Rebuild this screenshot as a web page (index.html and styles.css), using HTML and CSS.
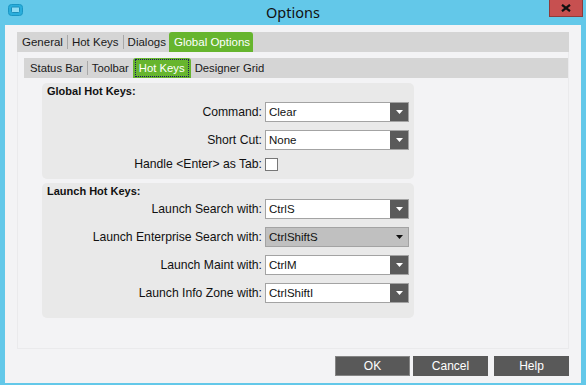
FILE: index.html
```html
<!DOCTYPE html>
<html>
<head>
<meta charset="utf-8">
<link rel="stylesheet" href="styles.css">
</head>
<body>
<div class="window">
  <div class="titlebar">
    <div class="tb-left">
      <svg class="appicon" width="15" height="12" viewBox="0 0 15 12">
        <rect x="0.5" y="0.5" width="14" height="11" rx="3" fill="#2aaedc" stroke="#1a96c4"/>
        <rect x="3.5" y="3" width="8" height="5.5" rx="1" fill="#8fdcf4" stroke="#1b8fbb"/>
      </svg>
    </div>
    <div class="title">Options</div>
    <div class="tb-right">
      <div class="close">
        <svg width="10" height="8" viewBox="0 0 10 8">
          <path d="M1 0.8 L9 7.2 M9 0.8 L1 7.2" stroke="#111" stroke-width="2.2" fill="none"/>
        </svg>
      </div>
    </div>
  </div>
  <div class="client">
    <div class="tabs outer">
      <div class="strip">
        <div class="tab first">General</div>
        <span class="sep"></span>
        <div class="tab">Hot Keys</div>
        <span class="sep"></span>
        <div class="tab pre">Dialogs</div>
        <div class="tab active">Global Options</div>
      </div>
      <div class="panel">
        <div class="strip inner">
          <div class="tab first">Status Bar</div>
          <span class="sep"></span>
          <div class="tab pre">Toolbar</div>
          <div class="tab active focus"><span class="focusbox">Hot Keys</span></div>
          <div class="tab">Designer Grid</div>
        </div>
        <div class="content">
          <div class="group g1">
            <div class="ghead">Global Hot Keys:</div>
            <div class="row first">
              <span class="lbl">Command:</span>
              <div class="combo"><span class="val">Clear</span><span class="btn"><svg width="7" height="4" viewBox="0 0 7 4"><path d="M0 0H7L3.5 4Z" fill="#fff"/></svg></span></div>
            </div>
            <div class="row">
              <span class="lbl">Short Cut:</span>
              <div class="combo"><span class="val">None</span><span class="btn"><svg width="7" height="4" viewBox="0 0 7 4"><path d="M0 0H7L3.5 4Z" fill="#fff"/></svg></span></div>
            </div>
            <div class="row chkrow">
              <span class="lbl">Handle &lt;Enter&gt; as Tab:</span>
              <span class="chk"></span>
            </div>
          </div>
          <div class="group g2">
            <div class="ghead">Launch Hot Keys:</div>
            <div class="row first">
              <span class="lbl">Launch Search with:</span>
              <div class="combo"><span class="val">CtrlS</span><span class="btn"><svg width="7" height="4" viewBox="0 0 7 4"><path d="M0 0H7L3.5 4Z" fill="#fff"/></svg></span></div>
            </div>
            <div class="row">
              <span class="lbl">Launch Enterprise Search with:</span>
              <div class="combo disabled"><span class="val">CtrlShiftS</span><span class="btn"><svg width="7" height="4" viewBox="0 0 7 4"><path d="M0 0H7L3.5 4Z" fill="#111"/></svg></span></div>
            </div>
            <div class="row">
              <span class="lbl">Launch Maint with:</span>
              <div class="combo"><span class="val">CtrlM</span><span class="btn"><svg width="7" height="4" viewBox="0 0 7 4"><path d="M0 0H7L3.5 4Z" fill="#fff"/></svg></span></div>
            </div>
            <div class="row">
              <span class="lbl">Launch Info Zone with:</span>
              <div class="combo"><span class="val">CtrlShiftI</span><span class="btn"><svg width="7" height="4" viewBox="0 0 7 4"><path d="M0 0H7L3.5 4Z" fill="#fff"/></svg></span></div>
            </div>
          </div>
        </div>
      </div>
    </div>
    <div class="buttons">
      <div class="button ok">OK</div>
      <div class="button cancel">Cancel</div>
      <div class="button help">Help</div>
    </div>
  </div>
</div>
</body>
</html>
```

FILE: styles.css
```css
html, body {
  margin: 0;
  padding: 0;
}
body {
  width: 586px;
  height: 385px;
  background: #63c8e9;
  font-family: "Liberation Sans", Arial, sans-serif;
  color: #000;
  overflow: hidden;
}
.window {
  width: 586px;
  height: 385px;
}
.titlebar {
  height: 25px;
  display: grid;
  grid-template-columns: 1fr auto 1fr;
  align-items: start;
}
.tb-left {
  padding: 4px 0 0 8px;
}
.appicon {
  display: block;
}
.title {
  font-family: "Noto Sans", "Open Sans", sans-serif;
  font-size: 14.5px;
  line-height: 24px;
  color: #111;
}
.tb-right {
  display: flex;
  justify-content: flex-end;
  padding-right: 3px;
}
.close {
  width: 34px;
  height: 17px;
  box-sizing: border-box;
  background: #c75050;
  border: 1px solid #8e3b3b;
  border-top: none;
  display: flex;
  align-items: center;
  justify-content: center;
}
.close svg {
  display: block;
  margin-top: -1px;
}
.client {
  margin-left: 5px;
  width: 576px;
  height: 358px;
  background: #f3f3f5;
  box-sizing: border-box;
  padding: 7px 0 0 12px;
}
.tabs.outer {
  width: 552px;
}
.strip {
  height: 20px;
  background: #d5d5d5;
  display: flex;
  align-items: stretch;
}
.tab {
  font-size: 11.5px;
  line-height: 20px;
  padding: 0 4px;
  color: #1a1a1a;
  white-space: nowrap;
}
.tab.first {
  padding-left: 5px;
}
.outer .tab.pre {
  padding-right: 3px;
}
.tab.active {
  background: #66b52e;
  color: #fff;
  border-radius: 3px 3px 0 0;
}
.outer > .strip .tab.active {
  padding: 0 3px 0 5px;
}
.sep {
  width: 1px;
  height: 14px;
  align-self: center;
  background: #a8a8a8;
}
.panel {
  height: 297px;
  box-sizing: border-box;
  border: 1px solid #eaeaec;
  border-top: none;
  padding: 6px 0 0 6px;
}
.strip.inner {
  width: 544px;
}
.inner .tab {
  font-size: 11.3px;
}
.inner .tab.first {
  padding-left: 6px;
}
.inner .tab.pre {
  padding-right: 4px;
}
.tab.focus {
  padding: 1px 2px;
  display: flex;
}
.focusbox {
  display: block;
  border: 1px dotted #1b1464;
  padding: 0 3px;
  line-height: 16px;
}
.content {
  padding: 5px 0 0 18px;
  display: flex;
  flex-direction: column;
  gap: 4px;
}
.group {
  width: 372px;
  box-sizing: border-box;
  background: #e9e9e9;
  border-radius: 5px;
  padding: 2px 5px 0 0;
  display: flex;
  flex-direction: column;
}
.g1 {
  height: 96px;
}
.g2 {
  height: 135px;
}
.ghead {
  font-size: 11px;
  font-weight: bold;
  line-height: 13px;
  padding-left: 5px;
  color: #111;
}
.row {
  display: grid;
  grid-template-columns: 220px 144px;
  column-gap: 3px;
  align-items: center;
  height: 20px;
  margin-top: 8px;
}
.g1 .row.first {
  margin-top: 4px;
}
.g2 .row.first {
  margin-top: 1px;
}
.row.chkrow {
  height: 13px;
  margin-top: 7px;
}
.lbl {
  font-size: 12.2px;
  text-align: right;
  white-space: nowrap;
  line-height: 14px;
  color: #111;
}
.combo {
  width: 144px;
  height: 20px;
  box-sizing: border-box;
  border: 1px solid #a3a3a3;
  background: #fff;
  display: flex;
}
.combo .val {
  flex: 1;
  font-size: 11.5px;
  line-height: 18px;
  padding-left: 3px;
  color: #111;
}
.combo .btn {
  width: 18px;
  background: #5a5a5a;
  display: flex;
  align-items: center;
  justify-content: center;
}
.combo .btn svg {
  display: block;
}
.combo.disabled {
  background: #c0c0c0;
}
.combo.disabled .btn {
  background: transparent;
}
.chk {
  width: 13px;
  height: 13px;
  box-sizing: border-box;
  background: #fff;
  border: 1px solid #777;
}
.buttons {
  width: 552px;
  display: flex;
  justify-content: flex-end;
  margin-top: 7px;
}
.button {
  width: 75px;
  height: 20px;
  box-sizing: border-box;
  background: #595959;
  color: #fff;
  font-size: 12px;
  line-height: 18px;
  text-align: center;
  border: 1px solid #595959;
}
.button.ok {
  border-color: #858585;
}
.button.cancel {
  margin-left: 3px;
}
.button.help {
  margin-left: 6px;
}
```
